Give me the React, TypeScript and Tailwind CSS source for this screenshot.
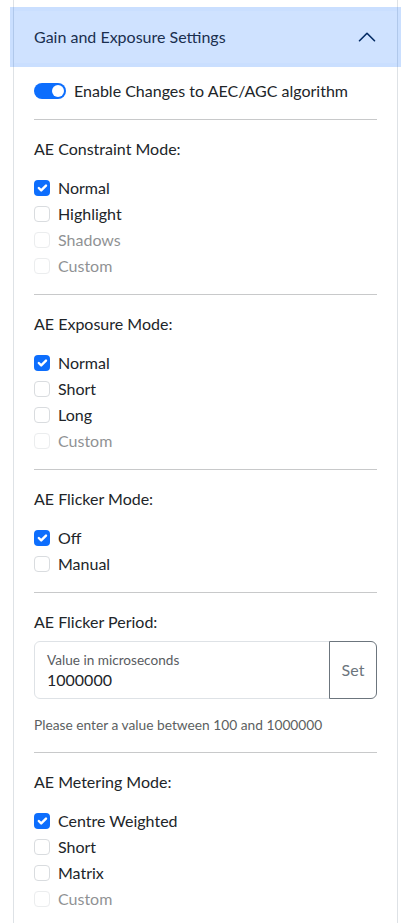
import React, { useState } from 'react';

interface Option {
  label: string;
  checked?: boolean;
  disabled?: boolean;
}

interface Section {
  title: string;
  options: Option[];
}

const constraintModes: Option[] = [
  { label: 'Normal', checked: true },
  { label: 'Highlight' },
  { label: 'Shadows', disabled: true },
  { label: 'Custom', disabled: true },
];

const exposureModes: Option[] = [
  { label: 'Normal', checked: true },
  { label: 'Short' },
  { label: 'Long' },
  { label: 'Custom', disabled: true },
];

const flickerModes: Option[] = [
  { label: 'Off', checked: true },
  { label: 'Manual' },
];

const meteringModes: Option[] = [
  { label: 'Centre Weighted', checked: true },
  { label: 'Short' },
  { label: 'Matrix' },
  { label: 'Custom', disabled: true },
];

const Checkbox: React.FC<{ option: Option }> = ({ option }) => (
  <label className={`flex h-6 mb-[2px] items-center gap-2 ${option.disabled ? 'opacity-50' : ''}`}>
    {option.checked ? (
      <span className="flex h-4 w-4 items-center justify-center rounded-[4px] bg-[#0d6efd]">
        <svg viewBox="0 0 20 20" className="h-4 w-4">
          <path d="m6 10 3 3 6-6" fill="none" stroke="#fff" strokeWidth="3" strokeLinecap="round" strokeLinejoin="round" />
        </svg>
      </span>
    ) : (
      <span className="h-4 w-4 rounded-[4px] border border-[#d9dcdf] bg-white" />
    )}
    <span>{option.label}</span>
  </label>
);

const Divider = () => <div className="h-px bg-[#c8c9ca]" />;

const CheckSection: React.FC<Section> = ({ title, options }) => (
  <div className="flex flex-col">
    <Divider />
    <div className="mt-[17px] h-6">{title}</div>
    <div className="mt-[15px] mb-[14px] flex flex-col">
      {options.map((o) => (
        <Checkbox key={o.label} option={o} />
      ))}
    </div>
  </div>
);

export default function App() {
  const [period, setPeriod] = useState('1000000');

  return (
    <div className="min-h-screen bg-white font-['Lato',sans-serif] text-[16px] leading-6 text-[#212529]">
      <div className="ml-[13px] w-[385px] min-h-[923px] border-x border-[#dee2e6] pt-[11px]">
        <button className="relative z-10 flex h-[52px] w-full items-center justify-between bg-[#cfe2ff] pl-5 pr-5 text-left shadow-[0_0_0_4px_rgba(13,110,253,0.22)]">
          <span className="text-[#1a2f4f]">Gain and Exposure Settings</span>
          <svg viewBox="0 0 16 16" className="h-5 w-5">
            <path d="M2 11 8 5l6 6" fill="none" stroke="#052c65" strokeWidth="1.3" strokeLinecap="round" strokeLinejoin="round" />
          </svg>
        </button>

        <div className="flex flex-col px-5 pt-4">
          <label className="flex h-6 items-center gap-2">
            <span className="flex h-4 w-8 items-center justify-end rounded-full bg-[#0d6efd] pr-[2px]">
              <span className="h-3 w-3 rounded-full bg-white" />
            </span>
            <span>Enable Changes to AEC/AGC algorithm</span>
          </label>
          <div className="mt-4" />

          <CheckSection title="AE Constraint Mode:" options={constraintModes} />
          <CheckSection title="AE Exposure Mode:" options={exposureModes} />
          <CheckSection title="AE Flicker Mode:" options={flickerModes} />

          <div className="flex flex-col">
            <Divider />
            <div className="mt-[17px] h-6">AE Flicker Period:</div>
            <div className="mt-[7px] flex h-[58px]">
              <div className="flex flex-1 flex-col rounded-l-[6px] border border-[#dee2e6] px-3">
                <span className="pt-[9px] text-[13.6px] leading-[18px] text-[#595c5f]">Value in microseconds</span>
                <input
                  value={period}
                  onChange={(e) => setPeriod(e.target.value)}
                  className="-mt-px h-6 w-full bg-transparent outline-none"
                />
              </div>
              <button className="-ml-px flex w-12 items-center justify-center rounded-r-[6px] border border-[#6c757d] text-[#6c757d]">
                Set
              </button>
            </div>
            <div className="mt-[15px] text-[13.75px] leading-[21px] text-[#5c5f62]">
              Please enter a value between 100 and 1000000
            </div>
            <div className="mt-[17px]" />
          </div>

          <CheckSection title="AE Metering Mode:" options={meteringModes} />
        </div>
      </div>
    </div>
  );
}
